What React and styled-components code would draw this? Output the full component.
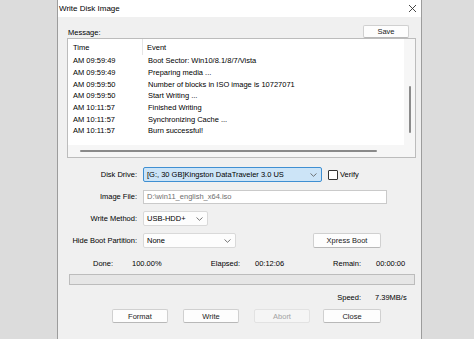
import React from 'react'
import styled, { createGlobalStyle } from 'styled-components'

const Global = createGlobalStyle`
  html, body, #root { margin: 0; padding: 0; height: 339px; overflow: hidden; }
  body { font-family: "Liberation Sans", Arial, sans-serif; color: #000; }
  * { box-sizing: border-box; }
`

const Page = styled.div`
  display: flex;
  height: 339px;
  background: #dcdcdc;
  padding-left: 57px;
`

const Dialog = styled.div`
  width: 365px;
  display: flex;
  flex-direction: column;
  background: #f0f0f0;
  border-left: 1px solid #9c9c9c;
  border-right: 1px solid #9c9c9c;
`

const TitleBar = styled.div`
  height: 17px;
  background: #fff;
  display: flex;
  align-items: center;
  justify-content: space-between;
  padding: 0 4px 1px 1px;
  font-size: 8px;
`

const Body = styled.div`
  padding: 7px 5px 0 9px;
  display: flex;
  flex-direction: column;
  font-size: 7.5px;
`

const MessageRow = styled.div`
  height: 14px;
  display: flex;
  justify-content: space-between;
  align-items: flex-end;
  padding-left: 1px;
  padding-bottom: 0;
  span { padding-bottom: 1px; }
`

const Button = styled.button`
  font-family: inherit;
  font-size: 7.5px;
  width: ${p => p.$w || 56}px;
  height: ${p => p.$h || 14}px;
  padding: 0;
  margin: 0 ${p => p.$mr || 0}px 0 0;
  background: ${p => (p.disabled ? '#f5f5f5' : '#fdfdfd')};
  color: ${p => (p.disabled ? '#a3a3a3' : '#1a1a1a')};
  border: 1px solid ${p => (p.disabled ? '#e2e2e2' : '#d0d0d0')};
  border-bottom-color: ${p => (p.disabled ? '#e2e2e2' : '#b8b8b8')};
  border-radius: 2px;
  display: flex;
  align-items: center;
  justify-content: center;
`

const ListBox = styled.div`
  height: 120px;
  border: 1px solid #bcbcbc;
  background: #fff;
  display: grid;
  grid-template-columns: 1fr 11px;
  grid-template-rows: 1fr 12px;
`

const Table = styled.div`
  display: flex;
  flex-direction: column;
`

const HeadRow = styled.div`
  height: 16px;
  display: grid;
  grid-template-columns: 75px 1fr;
  align-items: center;
`

const HeadCell = styled.div`
  height: 16px;
  display: flex;
  align-items: center;
  padding-left: ${p => p.$pl}px;
  border-right: ${p => (p.$sep ? '1px solid #e5e5e5' : 'none')};
`

const Row = styled.div`
  height: 11.7px;
  display: grid;
  grid-template-columns: 75px 1fr;
  align-items: center;
  white-space: nowrap;
`

const Cell = styled.div`
  padding-left: ${p => p.$pl}px;
`

const VScroll = styled.div`
  background: #f6f6f6;
  display: flex;
  justify-content: center;
  padding-top: 47px;
  div { width: 2px; height: 47px; background: #8a8a8a; border-radius: 1px; }
`

const HScroll = styled.div`
  grid-column: 1 / 2;
  background: #f6f6f6;
  display: flex;
  align-items: center;
  padding-left: 12px;
  div { height: 2px; width: 297px; background: #8a8a8a; border-radius: 1px; }
`

const Corner = styled.div`
  background: #f6f6f6;
`

const Form = styled.div`
  margin-top: 9px;
  display: grid;
  grid-template-columns: 70px 1fr;
  column-gap: 6px;
  row-gap: 7px;
  align-items: center;
`

const Label = styled.div`
  text-align: right;
  white-space: nowrap;
`

const Control = styled.div`
  display: flex;
  align-items: center;
  height: 15px;
`

const Select = styled.div`
  width: ${p => p.$w}px;
  height: ${p => p.$h || 15}px;
  display: flex;
  align-items: center;
  justify-content: space-between;
  padding: 0 4px 0 3px;
  background: ${p => (p.$active ? '#cce4f7' : '#fdfdfd')};
  border: 1px solid ${p => (p.$active ? '#3f8fd2' : '#d9d9d9')};
  border-radius: 2px;
  white-space: nowrap;
  overflow: hidden;
`

const Input = styled.div`
  width: 244px;
  height: 14px;
  display: flex;
  align-items: center;
  padding-left: 3px;
  background: #fff;
  border: 1px solid #cacaca;
  color: #6e6e6e;
`

const Check = styled.div`
  width: 10px;
  height: 10px;
  margin: 0 2px 0 6px;
  background: #fff;
  border: 1px solid #333;
  border-radius: 1px;
`

const Spacer = styled.div`
  width: ${p => p.$w}px;
`

const Stats = styled.div`
  display: grid;
  grid-template-columns: 46px 80px 47px 74px 47px 1fr;
  align-items: center;
  height: 12px;
  margin-top: ${p => p.$mt}px;
  white-space: nowrap;
`

const StatLabel = styled.div`
  text-align: right;
  grid-column: ${p => p.$col || 'auto'};
`

const StatValue = styled.div`
  padding-left: ${p => p.$pl || 15}px;
`

const Progress = styled.div`
  margin: 5px 0 0 2px;
  width: 346px;
  height: 11px;
  background: #e6e6e6;
  border: 1px solid #bcbcbc;
`

const Buttons = styled.div`
  display: flex;
  margin-top: 6px;
  padding-left: 45px;
`

const Chevron = () => (
  <svg width="7" height="4" viewBox="0 0 7 4">
    <path d="M0.5 0.5 L3.5 3.3 L6.5 0.5" fill="none" stroke="#555" strokeWidth="0.8" />
  </svg>
)

const CloseIcon = () => (
  <svg width="9" height="9" viewBox="0 0 9 9">
    <path d="M1 1 L8 8 M8 1 L1 8" stroke="#333" strokeWidth="0.9" />
  </svg>
)

const rows = [
  ['AM 09:59:49', 'Boot Sector: Win10/8.1/8/7/Vista'],
  ['AM 09:59:49', 'Preparing media ...'],
  ['AM 09:59:50', 'Number of blocks in ISO image is 10727071'],
  ['AM 09:59:50', 'Start Writing ...'],
  ['AM 10:11:57', 'Finished Writing'],
  ['AM 10:11:57', 'Synchronizing Cache ...'],
  ['AM 10:11:57', 'Burn successful!'],
]

export default function App () {
  return (
    <Page>
      <Global />
      <Dialog>
        <TitleBar>
          <span>Write Disk Image</span>
          <CloseIcon />
        </TitleBar>
        <Body>
          <MessageRow>
            <span>Message:</span>
            <Button $w={46} $h={13} $mr={7}>Save</Button>
          </MessageRow>
          <ListBox>
            <Table>
              <HeadRow>
                <HeadCell $pl={5} $sep>Time</HeadCell>
                <HeadCell $pl={4}>Event</HeadCell>
              </HeadRow>
              {rows.map((r, i) => (
                <Row key={i}>
                  <Cell $pl={5}>{r[0]}</Cell>
                  <Cell $pl={5}>{r[1]}</Cell>
                </Row>
              ))}
            </Table>
            <VScroll><div /></VScroll>
            <HScroll><div /></HScroll>
            <Corner />
          </ListBox>

          <Form>
            <Label>Disk Drive:</Label>
            <Control>
              <Select $w={179} $active>
                <span>[G:, 30 GB]Kingston DataTraveler 3.0 US</span>
                <Chevron />
              </Select>
              <Check />
              <span>Verify</span>
            </Control>

            <Label>Image File:</Label>
            <Control>
              <Input>D:\win11_english_x64.iso</Input>
            </Control>

            <Label>Write Method:</Label>
            <Control>
              <Select $w={65}>
                <span>USB-HDD+</span>
                <Chevron />
              </Select>
            </Control>

            <Label>Hide Boot Partition:</Label>
            <Control>
              <Select $w={93}>
                <span>None</span>
                <Chevron />
              </Select>
              <Spacer $w={77} />
              <Button $w={68} $h={15}>Xpress Boot</Button>
            </Control>
          </Form>

          <Stats $mt={9}>
            <StatLabel>Done:</StatLabel>
            <StatValue $pl={19}>100.00%</StatValue>
            <StatLabel>Elapsed:</StatLabel>
            <StatValue>00:12:06</StatValue>
            <StatLabel>Remain:</StatLabel>
            <StatValue>00:00:00</StatValue>
          </Stats>
          <Progress />
          <Stats $mt={6}>
            <StatLabel $col="5">Speed:</StatLabel>
            <StatValue $pl={14}>7.39MB/s</StatValue>
          </Stats>

          <Buttons>
            <Button $mr={15}>Format</Button>
            <Button $mr={15}>Write</Button>
            <Button $mr={13} disabled>Abort</Button>
            <Button $w={58}>Close</Button>
          </Buttons>
        </Body>
      </Dialog>
    </Page>
  )
}
